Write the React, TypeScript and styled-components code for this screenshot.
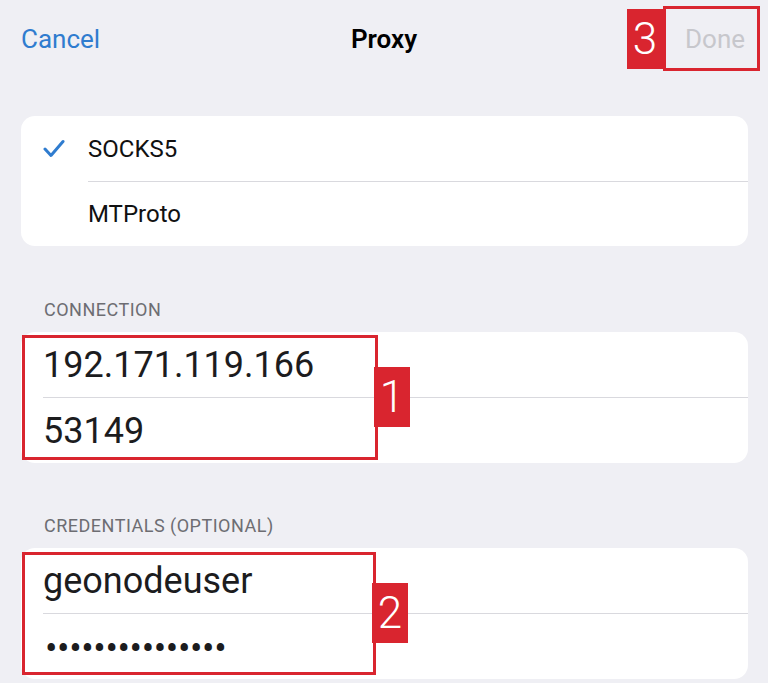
import React from "react";
import styled, { createGlobalStyle } from "styled-components";

const GlobalStyle = createGlobalStyle`
  html, body {
    margin: 0;
    padding: 0;
    background: #efeff4;
  }
  body {
    font-family: Roboto, "Liberation Sans", sans-serif;
    -webkit-font-smoothing: antialiased;
  }
`;

const RED = "#d9252f";

const Screen = styled.div`
  width: 768px;
  height: 683px;
  overflow: hidden;
  background: #efeff4;
  display: flex;
  flex-direction: column;
`;

const NavBar = styled.div`
  height: 77px;
  display: grid;
  grid-template-columns: 1fr auto 1fr;
  align-items: center;
  padding: 0 8px;
`;

const NavButton = styled.span`
  justify-self: start;
  margin-left: 13px;
  font-size: 26px;
  color: #2f7ccf;
`;

const Title = styled.span`
  font-size: 26px;
  font-weight: 600;
  color: #000;
`;

const DoneGroup = styled.div`
  justify-self: end;
  display: flex;
  align-items: center;
`;

const Badge = styled.div`
  width: 36px;
  height: 60px;
  background: ${RED};
  color: #fff;
  font-size: 44px;
  font-weight: 300;
  display: flex;
  align-items: center;
  justify-content: center;
`;

const DoneBox = styled.div`
  width: 97px;
  height: 65px;
  box-sizing: border-box;
  border: 3px solid ${RED};
  display: flex;
  align-items: center;
  padding-left: 19px;
  font-size: 26px;
  color: #c7c7cc;
`;

const Card = styled.div<{ $top?: number }>`
  position: relative;
  margin: ${(p) => p.$top ?? 0}px 20px 0 21px;
  background: #fff;
  border-radius: 14px;
`;

const OptionRow = styled.div`
  display: flex;
  height: 65px;
`;

const CheckSlot = styled.div`
  width: 67px;
  padding-left: 22px;
  box-sizing: border-box;
  display: flex;
  align-items: center;
`;

const OptionLabel = styled.div<{ $sep?: boolean }>`
  flex: 1;
  display: flex;
  align-items: center;
  font-size: 24px;
  color: #111;
  border-top: ${(p) => (p.$sep ? "1px solid #d9d9de" : "none")};
`;

const SectionHeader = styled.div<{ $top?: number }>`
  padding: ${(p) => p.$top ?? 54}px 0 12px 44px;
  font-size: 18px;
  line-height: 20px;
  color: #6d6d72;
  letter-spacing: 0.5px;
`;

const FieldRow = styled.div`
  margin-left: 22px;
  height: 65px;
  display: flex;
  align-items: center;
  font-size: 36px;
  color: #1c1c1e;

  & + & {
    border-top: 1px solid #d9d9de;
  }
`;

const Dots = styled.span`
  font-size: 37px;
  letter-spacing: -0.4px;
  padding-top: 4px;
  margin-left: 2px;
`;

const Marker = styled.div<{ $w: number; $h: number }>`
  position: absolute;
  left: 1px;
  top: ${(p) => (130 - p.$h) / 2}px;
  width: ${(p) => p.$w}px;
  height: ${(p) => p.$h}px;
  box-sizing: border-box;
  border: 3px solid ${RED};
  pointer-events: none;
`;

const MarkerBadge = styled(Badge)`
  position: absolute;
  left: 100%;
  top: 50%;
  transform: translate(-1px, -50%);
`;

const Check = () => (
  <svg width="22" height="20" viewBox="0 0 22 20">
    <polyline
      points="2,10 8,16.5 20,2.5"
      fill="none"
      stroke="#2f7ccf"
      strokeWidth="3"
      strokeLinecap="round"
      strokeLinejoin="round"
    />
  </svg>
);

const App: React.FC = () => {
  return (
    <Screen>
      <GlobalStyle />
      <NavBar>
        <NavButton>Cancel</NavButton>
        <Title>Proxy</Title>
        <DoneGroup>
          <Badge>3</Badge>
          <DoneBox>Done</DoneBox>
        </DoneGroup>
      </NavBar>

      <Card $top={39}>
        <OptionRow>
          <CheckSlot>
            <Check />
          </CheckSlot>
          <OptionLabel>SOCKS5</OptionLabel>
        </OptionRow>
        <OptionRow>
          <CheckSlot />
          <OptionLabel $sep>MTProto</OptionLabel>
        </OptionRow>
      </Card>

      <SectionHeader>CONNECTION</SectionHeader>
      <Card>
        <FieldRow>192.171.119.166</FieldRow>
        <FieldRow>53149</FieldRow>
        <Marker $w={356} $h={125}>
          <MarkerBadge>1</MarkerBadge>
        </Marker>
      </Card>

      <SectionHeader $top={53}>CREDENTIALS (OPTIONAL)</SectionHeader>
      <Card>
        <FieldRow>geonodeuser</FieldRow>
        <FieldRow>
          <Dots>•••••••••••••••</Dots>
        </FieldRow>
        <Marker $w={354} $h={123}>
          <MarkerBadge>2</MarkerBadge>
        </Marker>
      </Card>
    </Screen>
  );
};

export default App;
